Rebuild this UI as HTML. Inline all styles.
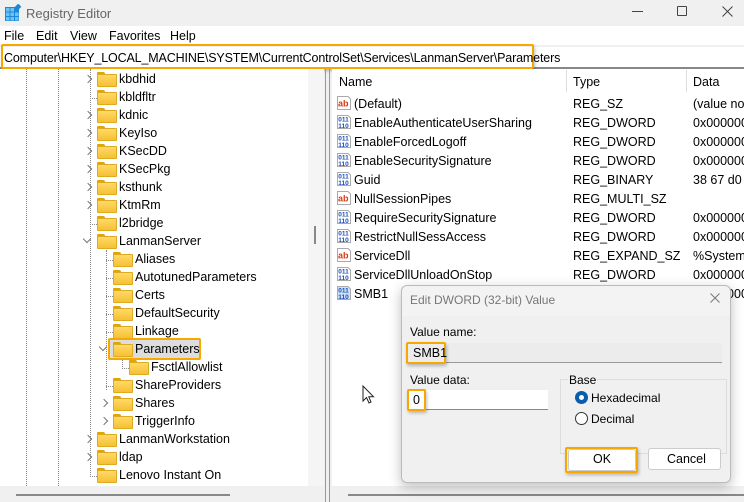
<!DOCTYPE html>
<html><head><meta charset="utf-8"><style>
*{margin:0;padding:0;box-sizing:border-box}
body{width:744px;height:502px;overflow:hidden;background:#f0f0f0;font-family:"Liberation Sans",sans-serif;font-size:12px;color:#000;position:relative}
.a{position:absolute;white-space:nowrap}
.fold{position:absolute;width:18px;height:13px}
.fold:before{content:"";position:absolute;left:0;top:0;width:8px;height:4px;background:#e2a400;border-radius:1px 2px 0 0}
.fold:after{content:"";position:absolute;left:0;top:2px;width:18px;height:11px;background:linear-gradient(#ffd966,#f5c136);border:1px solid #e0aa20;border-radius:1px}
.chev{position:absolute;width:6px;height:6px;border-right:1.3px solid #777;border-bottom:1.3px solid #777}
.r{transform:rotate(-45deg)}.d{transform:rotate(45deg)}
.vd{position:absolute;border-left:1px dotted #888;width:0}
.hd{position:absolute;border-top:1px dotted #888;height:0}
.ic{position:absolute;width:14px;height:14px}
.ob{position:absolute;border:2.5px solid #f5a800;border-radius:2px;box-shadow:1px 2px 3px rgba(0,0,0,.25)}
#clip{position:absolute;left:0;top:0;width:744px;height:502px;overflow:hidden}
</style></head><body><div id="clip">
<svg class="a" style="left:4px;top:4px" width="18" height="18" viewBox="0 0 18 18"><rect x="1" y="3" width="14" height="14" fill="#1e88d8"/><g fill="#6cc4f5"><rect x="2" y="4" width="3.5" height="3.5"/><rect x="6.5" y="4" width="3.5" height="3.5"/><rect x="2" y="8.5" width="3.5" height="3.5"/><rect x="6.5" y="8.5" width="3.5" height="3.5"/><rect x="11" y="8.5" width="3.5" height="3.5"/><rect x="2" y="13" width="3.5" height="3.5"/><rect x="6.5" y="13" width="3.5" height="3.5"/><rect x="11" y="13" width="3.5" height="3.5"/></g><rect x="12" y="0.5" width="4.5" height="4.5" transform="rotate(45 14.2 2.7)" fill="#1e88d8"/></svg>
<div class="a" style="left:26px;top:6px;font-size:13px;color:#666">Registry Editor</div>
<div class="a" style="left:632px;top:11px;width:11px;border-top:1px solid #444"></div>
<div class="a" style="left:677px;top:6px;width:10px;height:10px;border:1px solid #444;border-radius:1px"></div>
<svg class="a" style="left:722px;top:6px" width="11" height="11" viewBox="0 0 11 11"><path d="M0.5 0.5L10.5 10.5M10.5 0.5L0.5 10.5" stroke="#444" stroke-width="1"/></svg>
<div class="a" style="left:0;top:26px;width:744px;height:19px;background:#fff"></div>
<div class="a" style="left:4px;top:29px;font-size:12.5px">File</div>
<div class="a" style="left:36px;top:29px;font-size:12.5px">Edit</div>
<div class="a" style="left:70px;top:29px;font-size:12.5px">View</div>
<div class="a" style="left:109px;top:29px;font-size:12.5px">Favorites</div>
<div class="a" style="left:170px;top:29px;font-size:12.5px">Help</div>
<div class="a" style="left:0;top:47px;width:744px;height:20px;background:#fff"></div>
<div class="a" style="left:0;top:67px;width:744px;height:2px;background:#888"></div>
<div class="ob" style="left:1px;top:44px;width:533px;height:25px"></div>
<div class="a" style="left:4px;top:51px;font-size:12.5px;letter-spacing:-0.15px">Computer\HKEY_LOCAL_MACHINE\SYSTEM\CurrentControlSet\Services\LanmanServer\Parameters</div>
<div class="a" style="left:0;top:69px;width:308px;height:417px;background:#fff"></div>
<div class="a" style="left:308px;top:69px;width:16px;height:417px;background:#f5f5f5"></div>
<div class="a" style="left:314px;top:226px;width:2px;height:18px;background:#888"></div>
<div class="a" style="left:325px;top:69px;width:1px;height:433px;background:#999"></div>
<div class="a" style="left:329px;top:69px;width:1px;height:433px;background:#999"></div>
<div class="a" style="left:16px;top:494px;width:214px;height:2px;background:#888"></div>
<div class="vd" style="left:26px;top:69px;height:417px"></div>
<div class="vd" style="left:58px;top:69px;height:417px"></div>
<div class="vd" style="left:90px;top:69px;height:406px"></div>
<div class="vd" style="left:106px;top:250px;height:140px"></div>
<div class="vd" style="left:122px;top:358px;height:11px"></div>
<div id="tree"></div>
<div class="a" style="left:332px;top:69px;width:412px;height:417px;background:#fff"></div>
<div class="a" style="left:348px;top:494px;width:396px;height:2px;background:#888"></div>
<div class="a" style="left:566px;top:70px;width:1px;height:22px;background:#ddd"></div>
<div class="a" style="left:686px;top:70px;width:1px;height:22px;background:#ddd"></div>
<div class="a" style="left:339px;top:75px;font-size:12.5px">Name</div>
<div class="a" style="left:573px;top:75px;font-size:12.5px">Type</div>
<div class="a" style="left:693px;top:75px;font-size:12.5px">Data</div>
<div id="vals"></div>
<svg class="a" style="left:362px;top:385px" width="14" height="20" viewBox="0 0 14 20"><path d="M1 1 L1 16 L4.5 12.5 L7 18 L9 17 L6.8 11.8 L11.5 11.8 Z" fill="#fff" stroke="#222" stroke-width="1"/></svg>
<div class="a" style="left:401px;top:285px;width:330px;height:198px;background:#f3f3f3;border:1px solid #bbb;border-radius:6px;box-shadow:0 4px 12px rgba(0,0,0,.25)"></div>
<div class="a" style="left:410px;top:293px;font-size:12px;color:#777">Edit DWORD (32-bit) Value</div>
<svg class="a" style="left:710px;top:293px" width="10" height="10" viewBox="0 0 10 10"><path d="M0.5 0.5L9.5 9.5M9.5 0.5L0.5 9.5" stroke="#777" stroke-width="1"/></svg>
<div class="a" style="left:402px;top:316px;width:328px;height:166px;background:#f0f0f0;border-radius:0 0 6px 6px"></div>
<div class="a" style="left:410px;top:325px;font-size:12px">Value name:</div>
<div class="a" style="left:408px;top:343px;width:314px;height:20px;background:#ececec;border-bottom:1px solid #999"></div>
<div class="ob" style="left:406px;top:342px;width:40px;height:22px"></div>
<div class="a" style="left:413px;top:346px;font-size:12.5px">SMB1</div>
<div class="a" style="left:410px;top:373px;font-size:12px">Value data:</div>
<div class="a" style="left:408px;top:390px;width:140px;height:20px;background:#fff;border-bottom:1px solid #888"></div>
<div class="ob" style="left:407px;top:389px;width:19px;height:22px"></div>
<div class="a" style="left:413px;top:393px;font-size:12.5px">0</div>
<div class="a" style="left:560px;top:379px;width:167px;height:75px;border:1px solid #ddd"></div>
<div class="a" style="left:568px;top:373px;font-size:12px;background:#f0f0f0;padding:0 1px">Base</div>
<div class="a" style="left:575px;top:391px;width:13px;height:13px;border-radius:50%;background:#0b5cad"></div>
<div class="a" style="left:579px;top:395px;width:5px;height:5px;border-radius:50%;background:#fff"></div>
<div class="a" style="left:591px;top:391px;font-size:12px">Hexadecimal</div>
<div class="a" style="left:575px;top:412px;width:13px;height:13px;border-radius:50%;border:1px solid #333;background:#fff"></div>
<div class="a" style="left:591px;top:412px;font-size:12px">Decimal</div>
<div class="a" style="left:568px;top:449px;width:68px;height:22px;background:#fff;border:1px solid #ccc;border-radius:3px"></div>
<div class="ob" style="left:565px;top:447px;width:73px;height:26px"></div>
<div class="a" style="left:593px;top:452px;font-size:12.5px">OK</div>
<div class="a" style="left:648px;top:448px;width:73px;height:22px;background:#fff;border:1px solid #ccc;border-radius:3px"></div>
<div class="a" style="left:667px;top:452px;font-size:12.5px">Cancel</div>
</div>
<script>
var t=[["kbdhid",0,1],["kbldfltr",0,0],["kdnic",0,1],["KeyIso",0,1],["KSecDD",0,1],["KSecPkg",0,1],["ksthunk",0,1],["KtmRm",0,1],["l2bridge",0,0],["LanmanServer",0,2],["Aliases",1,0],["AutotunedParameters",1,0],["Certs",1,0],["DefaultSecurity",1,0],["Linkage",1,0],["Parameters",1,2],["FsctlAllowlist",2,0],["ShareProviders",1,0],["Shares",1,1],["TriggerInfo",1,1],["LanmanWorkstation",0,1],["ldap",0,1],["Lenovo Instant On",0,0]];
var h="";t.forEach(function(r,i){var top=70+18*i,fx=97+r[1]*16;
if(r[2]==1)h+='<div class="chev r" style="left:'+(fx-12)+'px;top:'+(top+6)+'px"></div>';
else if(r[2]==2)h+='<div class="chev d" style="left:'+(fx-13)+'px;top:'+(top+4)+'px"></div>';
else h+='<div class="hd" style="left:'+(fx-7)+'px;top:'+(top+10)+'px;width:7px"></div>';
if(r[0]=="Parameters")h+='<div class="a" style="left:110px;top:'+(top-1)+'px;width:90px;height:20px;background:#ddd"></div><div class="ob" style="left:108px;top:'+(top-2)+'px;width:93px;height:22px;box-shadow:none"></div>';
h+='<div class="fold" style="left:'+fx+'px;top:'+(top+2)+'px"></div><div class="a" style="left:'+(fx+22)+'px;top:'+(top+2)+'px;font-size:12.5px">'+r[0]+'</div>'});
document.getElementById("tree").innerHTML=h;
var v=[["(Default)","s","REG_SZ","(value not set)"],["EnableAuthenticateUserSharing","d","REG_DWORD","0x00000000 (0)"],["EnableForcedLogoff","d","REG_DWORD","0x00000001 (1)"],["EnableSecuritySignature","d","REG_DWORD","0x00000000 (0)"],["Guid","d","REG_BINARY","38 67 d0 e5"],["NullSessionPipes","s","REG_MULTI_SZ",""],["RequireSecuritySignature","d","REG_DWORD","0x00000000 (0)"],["RestrictNullSessAccess","d","REG_DWORD","0x00000001 (1)"],["ServiceDll","s","REG_EXPAND_SZ","%SystemRoot%"],["ServiceDllUnloadOnStop","d","REG_DWORD","0x00000001 (1)"],["SMB1","d","REG_DWORD","0x00000000 (0)"]];
h="";v.forEach(function(r,i){var top=94+19*i;
var ic=r[1]=="s"?'<svg class="ic" style="left:337px;top:'+(top+2)+'px" viewBox="0 0 14 14"><path d="M0.5 0.5H11L13.5 3V13.5H0.5Z" fill="#fff" stroke="#aaa"/><text x="1" y="10.5" font-size="9" font-weight="bold" fill="#d63a1a" font-family="Liberation Sans">ab</text></svg>':'<svg class="ic" style="left:337px;top:'+(top+2)+'px" viewBox="0 0 14 14"><path d="M0.5 0.5H11L13.5 3V13.5H0.5Z" fill="'+(i==10?'#cfe2f7':'#fff')+'" stroke="#aaa"/><text x="1.3" y="6.5" font-size="6.5" font-weight="bold" fill="#1a4fb8" font-family="Liberation Sans">011</text><text x="1.3" y="12.8" font-size="6.5" font-weight="bold" fill="#1a4fb8" font-family="Liberation Sans">110</text></svg>';
h+=ic+'<div class="a" style="left:354px;top:'+(top+3)+'px;font-size:12.5px">'+r[0]+'</div><div class="a" style="left:573px;top:'+(top+3)+'px;font-size:12.5px">'+r[2]+'</div><div class="a" style="left:693px;top:'+(top+3)+'px;width:51px;overflow:hidden;font-size:12.5px">'+r[3]+'</div>'});
document.getElementById("vals").innerHTML=h;
</script>
</body></html>
